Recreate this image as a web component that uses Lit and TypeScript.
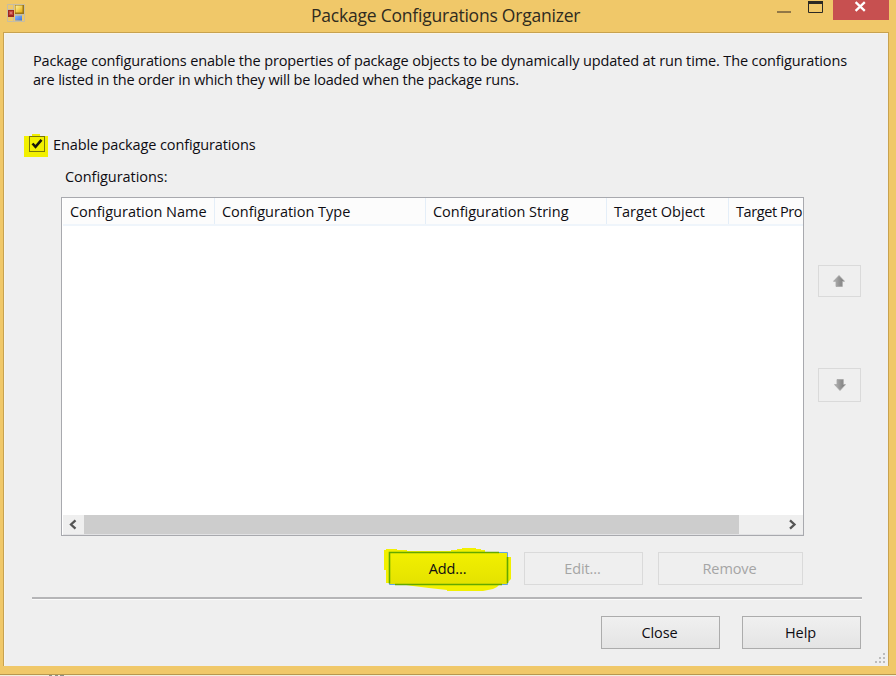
import { LitElement, html, css, svg } from "lit";
import { customElement } from "lit/decorators.js";
import { styleMap } from "lit/directives/style-map.js";

const columns = [
  { label: "Configuration Name", width: 152 },
  { label: "Configuration Type", width: 211 },
  { label: "Configuration String", width: 181 },
  { label: "Target Object", width: 122 },
  { label: "Target Pro", width: 75 },
];

const arrowUp = svg`<path d="M6 0.5 L11.5 6.3 H9.3 V11.5 H3 V6.3 H0.5 Z" fill="url(#g)" stroke="#a6a6a6" stroke-width="0.8"/>`;
const arrowDown = svg`<path d="M3 0.5 H9.3 V5.6 H11.5 L6 11.5 L0.5 5.6 H3 Z" fill="url(#g)" stroke="#a6a6a6" stroke-width="0.8"/>`;

@customElement("app-root")
export class AppRoot extends LitElement {
  static styles = css`
    :host {
      display: block;
      box-sizing: border-box;
      width: 896px;
      height: 676px;
      overflow: hidden;
      background: #f0f1dc;
      color: #0e0c12;
      font: 14.5px/19px "Open Sans", "Noto Sans", sans-serif;
    }
    * { box-sizing: border-box; }
    svg { display: block; flex: none; }
    .window {
      height: 675px;
      display: flex;
      flex-direction: column;
      background: #f0c869;
      border-bottom: 1px solid #b8974f;
      padding: 0 7px 8px 3px;
    }
    .title {
      height: 32px;
      display: flex;
      align-items: flex-start;
      flex: none;
    }
    .app-icon { margin: 4px 0 0 4px; }
    .caption {
      width: 274px;
      margin: 3px 0 0 286px;
      font-size: 17.5px;
      line-height: 24px;
      letter-spacing: -0.22px;
      white-space: nowrap;
      color: #2f2b20;
    }
    .controls { margin-left: auto; display: flex; }
    .body {
      flex: 1;
      display: flex;
      flex-direction: column;
      background: #efefef;
      border: 1px solid #c8a24f;
      border-bottom: 0;
      position: relative;
      box-shadow: inset 1px 1px #f7f4ec;
    }
    .intro {
      margin: 18px 0 0 29px;
      white-space: nowrap;
      letter-spacing: -0.13px;
    }
    .intro .last { letter-spacing: -0.19px; }
    .check-row { display: flex; height: 26px; margin: 44px 0 0 20px; }
    .check-row .text { margin: 2px 0 0 5px; letter-spacing: -0.12px; white-space: nowrap; }
    .list-label { margin: 8px 0 0 61px; height: 19px; line-height: 19px; letter-spacing: -0.05px; }
    .middle { display: flex; margin: 11px 0 0 57px; height: 339px; }
    .list {
      width: 743px;
      display: flex;
      flex-direction: column;
      background: #fff;
      border: 1px solid #a8a9ae;
      padding-left: 1px;
    }
    .head {
      display: flex;
      height: 28px;
      background: #fcfcfc;
      border-bottom: 2px solid #eff5fb;
    }
    .cell {
      flex: none;
      padding: 4px 0 0 7px;
      border-right: 1px solid #e4eef8;
      white-space: nowrap;
      letter-spacing: -0.01px;
    }
    .cell:last-child { border-right: 0; letter-spacing: -0.42px; }
    .rows { flex: 1; }
    .scroll {
      height: 20px;
      display: flex;
      background: #efefef;
      border-bottom: 1px solid #e2e2e4;
    }
    .thumb { width: 655px; background: #cdcdcd; margin-right: auto; }
    .movers { display: flex; flex-direction: column; margin: 68px 0 0 14px; gap: 71px; }
    .mover {
      width: 43px;
      height: 32px;
      display: flex;
      align-items: center;
      justify-content: center;
      border: 1px solid #dadada;
      background: #efefef;
      padding-right: 2px;
    }
    .mover.down { height: 34px; padding-right: 0; }
    .actions { display: flex; margin: 16px 0 0 385px; height: 33px; }
    .btn {
      display: flex;
      align-items: center;
      justify-content: center;
      height: 33px;
      border: 1px solid #acacac;
      background: linear-gradient(#f0f0f0, #e4e4e4);
      letter-spacing: -0.1px;
      padding: 0 2px 1px 0;
      position: relative;
    }
    .btn.off { color: #a5a5a5; border-color: #dadada; background: #efefef; }
    .btn.add { background: none; border: 0; }
    .btn.add span { position: relative; }
    .mark { position: absolute; left: -6px; top: -6px; }
    .rule { margin: 12px 26px 0 28px; height: 3px; flex: none; border-top: 2px solid #b5b5b7; border-bottom: 1px solid #fbfbfb; }
    .footer { display: flex; justify-content: flex-end; gap: 22px; margin: 16px 27px 0 0; }
    .grip { position: absolute; right: 2px; bottom: 2px; }
  `;

  private button(label: string, width: number, cls = "", left = 0) {
    return html`<div class="btn ${cls}" style=${styleMap({ width: `${width}px`, marginLeft: `${left}px` })}><span>${label}</span></div>`;
  }

  private arrow(shape: unknown) {
    return html`<svg width="12" height="12" viewBox="0 0 12 12">
      <defs><linearGradient id="g"><stop offset="0" stop-color="#b5b5b5" /><stop offset="1" stop-color="#777" /></linearGradient></defs>
      ${shape}
    </svg>`;
  }

  render() {
    return html`
      <div class="window">
        <div class="title">
          <svg class="app-icon" width="18" height="18" viewBox="0 0 18 18">
            <defs>
              <linearGradient id="y" x2="1" y2="1"><stop stop-color="#fff2a0" /><stop offset="1" stop-color="#e8ad08" /></linearGradient>
              <linearGradient id="b" x2="1" y2="1"><stop stop-color="#8cb8fa" /><stop offset="1" stop-color="#3c74dc" /></linearGradient>
            </defs>
            <path d="M.5 .5H17.5V17.5H.5ZM6.5 .5V17.5M.5 5.5H6.5M.5 12.5H6.5M6.5 10.5H17.5M14.5 10.5V17.5" fill="none" stroke="#c5bda5" />
            <rect x="8" y="1" width="9" height="9" fill="#9b7518" />
            <rect x="8.5" y="1.5" width="7" height="7" fill="url(#y)" />
            <rect x="1" y="6" width="6" height="7" fill="#9c2720" />
            <rect x="2" y="7" width="4" height="4" fill="#c5483e" />
            <rect x="3.5" y="8" width="1" height="2" fill="#f0a79c" />
            <rect x="8" y="11.5" width="7" height="5" fill="url(#b)" />
          </svg>
          <div class="caption">Package Configurations Organizer</div>
          <div class="controls">
            <svg width="116" height="20" viewBox="0 0 116 20">
              <rect x="4" y="11" width="14" height="2" fill="#917746" />
              <path d="M35.5 1.5H49.5V12.5H35.5Z" fill="none" stroke="#2a2924" />
              <rect x="35" y="1" width="15" height="3" fill="#2a2924" />
              <rect x="60" y="0" width="56" height="20" fill="#c75050" />
              <path d="M82.6 2.2L91.8 10.8M91.8 2.2L82.6 10.8" stroke="#fff" stroke-width="2.3" />
            </svg>
          </div>
        </div>
        <div class="body">
          <div class="intro">
            Package configurations enable the properties of package objects to be dynamically updated at run time. The configurations<br /><span class="last">are listed in the order in which they will be loaded when the package runs.</span>
          </div>
          <div class="check-row">
            <svg width="24" height="26" viewBox="0 0 24 26">
              <path d="M0 3H8V1H16V3H24V24H0Z" fill="#f2f000" />
              <rect x="5.5" y="3.5" width="15" height="15" fill="#f2f000" stroke="#77770c" />
              <path d="M8.5 10.5L11.5 13.8L17.5 6.8" fill="none" stroke="#16160a" stroke-width="2.6" />
            </svg>
            <span class="text">Enable package configurations</span>
          </div>
          <div class="list-label">Configurations:</div>
          <div class="middle">
            <div class="list">
              <div class="head">
                ${columns.map((c) => html`<div class="cell" style=${styleMap({ width: `${c.width}px` })}>${c.label}</div>`)}
              </div>
              <div class="rows"></div>
              <div class="scroll">
                <svg width="21" height="19" viewBox="0 0 21 19"><path d="M12.5 5.3L8 9.5L12.5 13.7" fill="none" stroke="#555" stroke-width="2.3" /></svg>
                <div class="thumb"></div>
                <svg width="21" height="19" viewBox="0 0 21 19"><path d="M8 5.3L12.5 9.5L8 13.7" fill="none" stroke="#555" stroke-width="2.3" /></svg>
              </div>
            </div>
            <div class="movers">
              <div class="mover">${this.arrow(arrowUp)}</div>
              <div class="mover down">${this.arrow(arrowDown)}</div>
            </div>
          </div>
          <div class="actions">
            <div class="btn add" style=${styleMap({ width: "119px" })}>
              <svg class="mark" width="130" height="46" viewBox="0 0 130 46">
                <defs><linearGradient id="a" x2="0" y2="1"><stop stop-color="#f2f000" /><stop offset="1" stop-color="#e4e200" /></linearGradient></defs>
                <path d="M1 4H3V3H14V4H24V5H68V4H74V3H79V2H93V3H98V4H102V6H124V11H128V33L124 37H118L114 41L110 43L100 45H64V44L46 42L30 40L16 38L6 37H3V24H1Z" fill="#f2f000" />
                <path d="M6.5 6.5H124.5V38.5H6.5Z" fill="url(#a)" stroke="#62a5e0" />
                <path d="M116 6.5H6.5V37.5M12 38.5H119M124.5 11V37" fill="none" stroke="#62a800" stroke-width="1.6" />
              </svg>
              <span>Add...</span>
            </div>
            ${this.button("Edit...", 119, "off", 16)}
            ${this.button("Remove", 145, "off", 15)}
          </div>
          <div class="rule"></div>
          <div class="footer">
            ${this.button("Close", 119)}
            ${this.button("Help", 119)}
          </div>
          <svg class="grip" width="11" height="11" viewBox="0 0 11 11" fill="#bcbcbc">
            <path d="M8 0h2v2h-2zM4 4h2v2h-2zM8 4h2v2h-2zM0 8h2v2h-2zM4 8h2v2h-2zM8 8h2v2h-2z" />
          </svg>
        </div>
      </div>
      <svg width="70" height="1" viewBox="0 0 70 1"><path d="M49 0h3v1h-3zM55 0h3v1h-3zM60 0h4v1h-4z" fill="#8b9288" /></svg>
    `;
  }
}
